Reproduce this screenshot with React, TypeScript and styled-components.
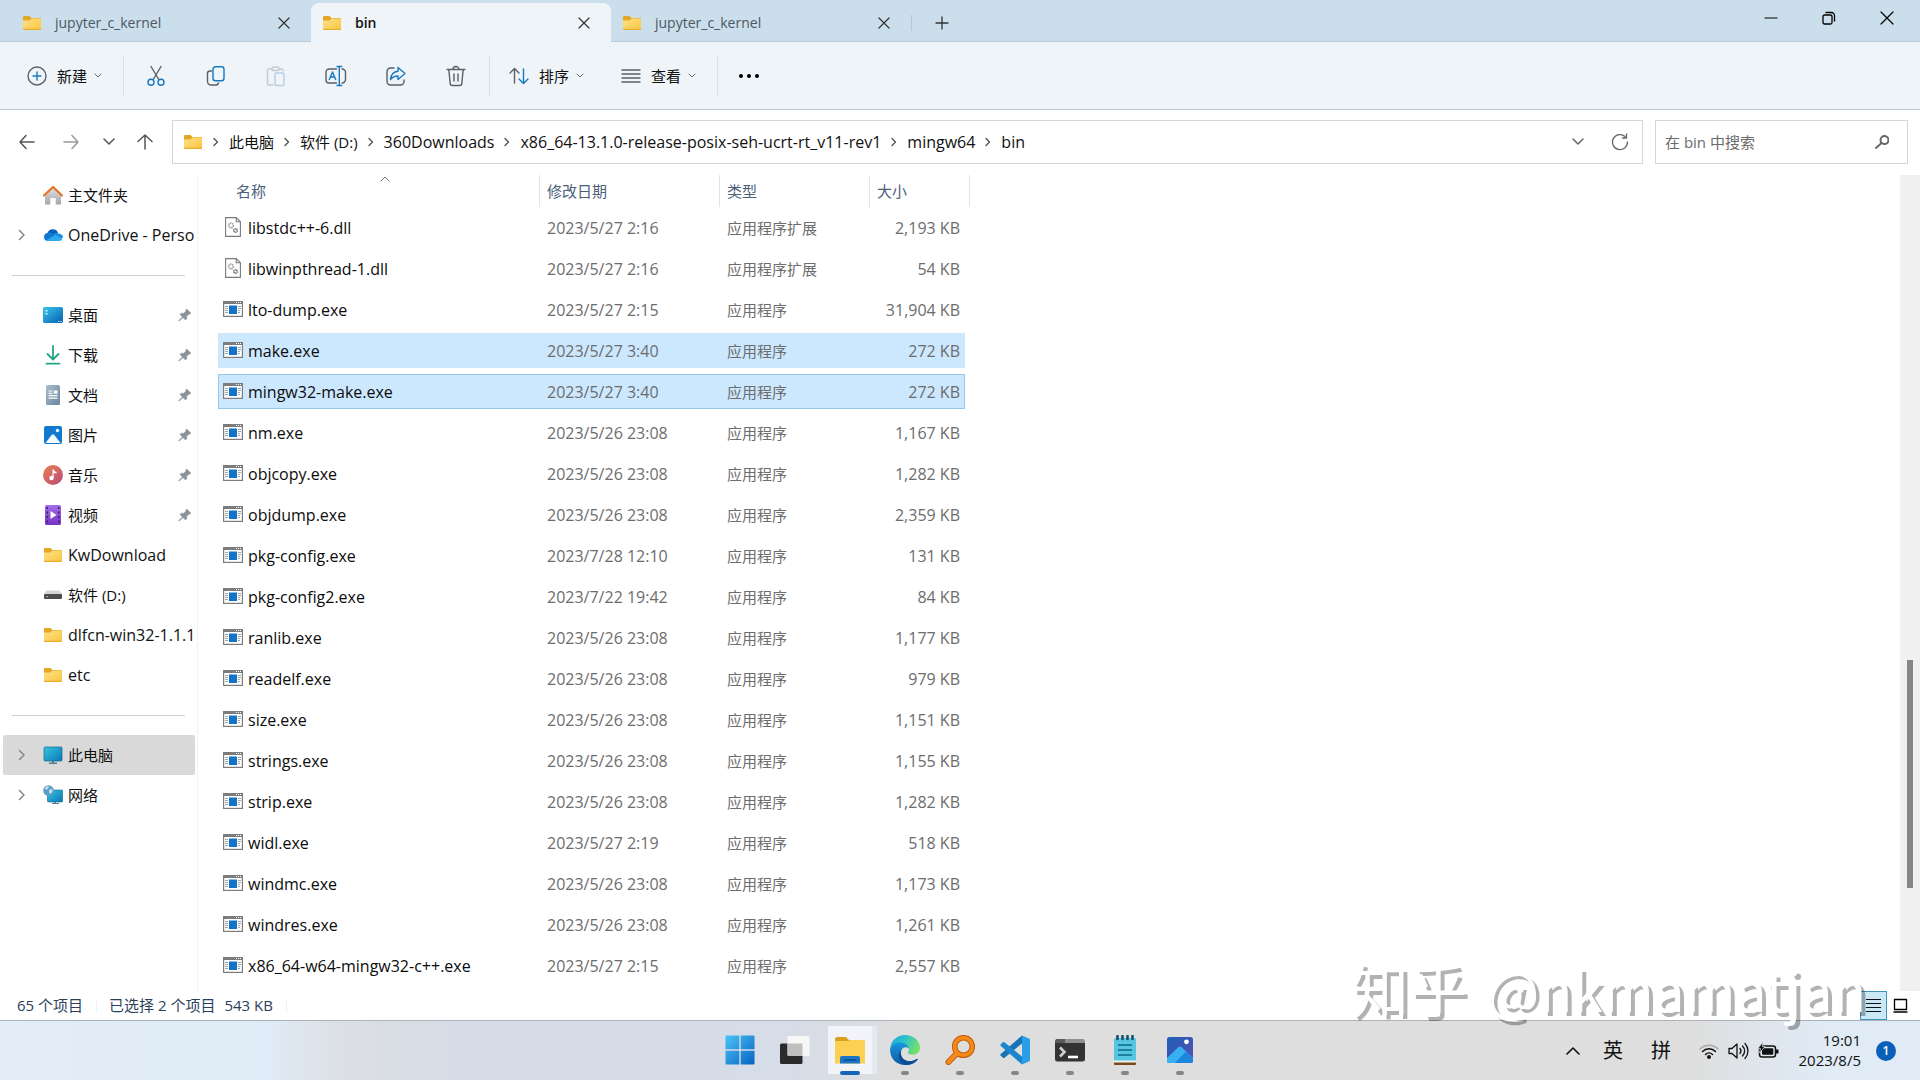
import React from 'react';
import styled, { createGlobalStyle, css } from 'styled-components';

const Global = createGlobalStyle`
  * { box-sizing: border-box; }
  body {
    margin: 0;
    background: #fff;
    color: #111;
    font-family: "Open Sans", "Noto Sans CJK SC", sans-serif;
    font-size: 15px;
    line-height: 20px;
  }
  button { font: inherit; color: inherit; background: none; border: 0; padding: 0; }
  svg { display: block; flex: none; }
  ul, ol { list-style: none; margin: 0; padding: 0; }
  a { color: inherit; text-decoration: none; }
`;

const Desktop = styled.div`
  position: relative;
  display: flex;
  flex-direction: column;
  height: 100vh;
  overflow: hidden;
`;

/* ---------- title bar ---------- */

const TitleBar = styled.header`
  display: flex;
  height: 42px;
  padding-left: 11px;
  background: #cbdeeb;
  box-shadow: inset 0 -1px #b9cbd9;
`;

const Tab = styled.div<{ $active?: boolean }>`
  display: flex;
  align-items: center;
  width: 300px;
  margin-top: 3px;
  padding: 0 17px 0 11px;
  font-size: 14px;
  color: #4b5863;
  ${p => p.$active && css`
    background: #eff4f9;
    border-radius: 8px 8px 0 0;
    color: #111;
    font-weight: 600;
  `}
`;

const TabTitle = styled.span`
  flex: 1;
  margin-left: 13px;
`;

const IconButton = styled.button<{ $w?: number }>`
  display: flex;
  align-items: center;
  justify-content: center;
  width: ${p => p.$w ?? 20}px;
  align-self: stretch;
`;

const NewTab = styled.div`
  display: flex;
  margin: 3px 0 0;
  &::before {
    content: '';
    width: 1px;
    height: 16px;
    align-self: center;
    background: #b5c7d5;
  }
`;

const WindowButtons = styled.div`
  display: flex;
  height: 36px;
  margin-left: auto;
  padding-right: 4px;
`;

/* ---------- command bar ---------- */

const Toolbar = styled.div`
  display: flex;
  align-items: center;
  height: 68px;
  padding-left: 10px;
  background: #eff4f9;
  border-bottom: 1px solid #bcc8d1;
`;

const Command = styled.button`
  display: flex;
  align-items: center;
  height: 40px;
  padding: 0 18px 0 17px;
  & + & { margin-left: 2px; }
  span { margin: 0 7px 0 10px; }
`;

const ToolButton = styled.button`
  display: flex;
  align-items: center;
  justify-content: center;
  width: 60px;
  height: 40px;
`;

const Separator = styled.span`
  width: 1px;
  height: 40px;
  margin: 0 2px 0 3px;
  background: #d9e0e6;
`;

/* ---------- navigation ---------- */

const NavBar = styled.nav`
  display: flex;
  align-items: center;
  height: 65px;
  padding: 0 12px 1px 5px;
`;

const Address = styled.div`
  display: flex;
  align-items: center;
  flex: 1;
  height: 44px;
  margin: 0 12px 0 7px;
  padding: 0 2px 0 10px;
  border: 1px solid #d5d5d5;
`;

const Crumbs = styled.ol`
  display: flex;
  flex: 1;
`;

const Crumb = styled.li<{ $latin?: boolean }>`
  display: flex;
  align-items: center;
  font-size: ${p => (p.$latin ? 16 : 15)}px;
  svg { margin: 0 9px; }
`;

const SearchBox = styled.label`
  display: flex;
  align-items: center;
  width: 253px;
  height: 44px;
  padding: 0 18px 0 9px;
  border: 1px solid #d5d5d5;
  input {
    flex: 1;
    min-width: 0;
    padding: 0;
    border: 0;
    outline: 0;
    font: inherit;
    background: none;
  }
  input::placeholder { color: #6b6b6b; opacity: 1; }
`;

/* ---------- body ---------- */

const Body = styled.div`
  display: flex;
  flex: 1;
  min-height: 0;
`;

const Sidebar = styled.aside`
  width: 198px;
  border-right: 1px solid #f1f3f5;
  overflow: hidden;
`;

const SideItem = styled.li<{ $active?: boolean; $latin?: boolean }>`
  display: flex;
  align-items: center;
  height: 40px;
  margin: 0 2px 0 3px;
  overflow: hidden;
  border-radius: 2px;
  background: ${p => (p.$active ? '#d9d9d9' : 'none')};
  font-size: ${p => (p.$latin ? 16 : 15)}px;
`;

const Expander = styled.span`
  display: flex;
  justify-content: center;
  flex: none;
  width: 40px;
  padding-right: 2px;
`;

const SideLink = styled.a`
  display: flex;
  align-items: center;
  gap: 5px;
  flex: 1;
  white-space: nowrap;
  svg + span { flex: 1; }
`;

const Pin = styled.span`
  margin-right: 3px;
`;

const SideRule = styled.li`
  height: 40px;
  padding: 20px 12px 0;
  &::before {
    content: '';
    display: block;
    height: 1px;
    background: #cfcfcf;
  }
`;

const ListPane = styled.main`
  flex: 1;
  padding-left: 20px;
  overflow: hidden;
`;

const FileTable = styled.table`
  width: 752px;
  table-layout: fixed;
  border-collapse: separate;
  border-spacing: 0;
  th, td { padding: 0; text-align: left; font-weight: 400; }
`;

const HeadCell = styled.div<{ $first?: boolean }>`
  position: relative;
  display: flex;
  align-items: center;
  height: 32px;
  margin-bottom: 3px;
  padding-left: ${p => (p.$first ? 18 : 7)}px;
  border-right: 1px solid #e3e3e3;
  color: #4c607a;
`;

const SortMark = styled.span`
  position: absolute;
  top: 0;
  left: 50%;
`;

type Mark = 'none' | 'selected' | 'focused';

const Cell = styled.div<{ $mark: Mark; $latin?: boolean }>`
  display: flex;
  align-items: center;
  height: 35px;
  margin-bottom: 6px;
  padding-left: 7px;
  border: solid transparent;
  border-width: 1px 0;
  color: #6d6d6d;
  font-size: ${p => (p.$latin ? 16 : 15)}px;
  ${p => p.$mark !== 'none' && css`background: #cce8ff;`}
  ${p => p.$mark === 'selected' && css`border-color: #cce8ff;`}
  ${p => p.$mark === 'focused' && css`border-color: #99c9ea;`}
`;

const NameCell = styled(Cell)`
  gap: 5px;
  padding-left: 4px;
  border-left-width: 1px;
  color: #0c0c0c;
  svg { margin-top: -2px; }
`;

const SizeCell = styled(Cell)`
  justify-content: flex-end;
  margin-right: 5px;
  padding-right: 4px;
  border-right-width: 1px;
`;

const ScrollTrack = styled.div`
  display: grid;
  grid-template-rows: 485fr 228fr 103fr;
  width: 20px;
  padding: 0 7px;
  background: #f0f0f0;
`;

const ScrollThumb = styled.div`
  grid-row: 2;
  background: #868686;
`;

const StatusBar = styled.footer`
  display: flex;
  align-items: center;
  height: 29px;
  padding: 0 6px 0 17px;
  color: #2b3f5c;
`;

const StatusText = styled.span`
  margin-right: 9px;
  padding-bottom: 2px;
`;

const StatusDivider = styled.span`
  width: 1px;
  height: 14px;
  margin: 0 12px 0 4px;
  background: #eef2f7;
`;

const ViewButton = styled.button<{ $on?: boolean }>`
  display: flex;
  align-items: center;
  justify-content: center;
  width: 27px;
  height: 29px;
  ${p => p.$on && css`
    margin-left: auto;
    background: #cbe8f6;
    border: 1px solid #3f93bd;
  `}
`;

/* ---------- taskbar ---------- */

const Taskbar = styled.footer`
  display: grid;
  grid-template-columns: 1fr auto 1fr;
  height: 60px;
  border-top: 1px solid #abb2ba;
  background: linear-gradient(90deg, #e3edf7 0, #dfebf6 14%, #dcdfe3 18%, #d5dbe7 25%, #d6dce8 41%, #dedede 47%, #dedede 88%, #e0ebf6 95%, #e0ebf6 100%);
`;

const Apps = styled.div`
  display: flex;
  grid-column: 2;
`;

const AppButton = styled.button<{ $state?: 'running' | 'active' }>`
  display: flex;
  flex-direction: column;
  align-items: center;
  justify-content: flex-end;
  width: 55px;
  gap: 6px;
  padding-bottom: 5px;
  &::after {
    content: '';
    width: ${p => (p.$state === 'active' ? 20 : 8)}px;
    height: 4px;
    border-radius: 2px;
    background: ${p => (p.$state === 'active' ? '#1466b8' : p.$state ? '#868686' : 'none')};
  }
  ${p => p.$state === 'active' && css`
    background: linear-gradient(#f2f4f9, #f2f4f9) 5px 5px / 44px 48px no-repeat,
      linear-gradient(#e6e9f0, #e6e9f0) 8px 5px / 46px 48px no-repeat;
  `}
`;

const Tray = styled.div`
  display: flex;
  align-items: center;
  justify-content: flex-end;
  padding-right: 24px;
`;

const Ime = styled.button`
  width: 48px;
  font-size: 20px;
  line-height: 28px;
`;

const Status = styled.button`
  display: flex;
  align-items: center;
  gap: 9px;
  margin: 0 18px 0 14px;
`;

const Clock = styled.button`
  width: 64px;
  margin-right: 15px;
  padding-bottom: 2px;
  text-align: right;
  line-height: 20px;
  white-space: nowrap;
`;

const Badge = styled.span`
  width: 20px;
  height: 20px;
  border-radius: 50%;
  background: #0a5fb8;
  color: #fff;
  font-size: 12px;
  font-weight: 600;
  text-align: center;
`;

const Watermark = styled.div`
  position: absolute;
  right: 54px;
  bottom: 54px;
  display: flex;
  align-items: baseline;
  gap: 20px;
  color: #fff;
  font-family: "Noto Sans CJK SC", sans-serif;
  font-size: 55px;
  line-height: 76px;
  text-shadow: 4px 4px 0 rgba(0, 0, 0, 0.3);
  pointer-events: none;
  b { font-weight: 400; font-size: 58px; }
`;

/* ---------- drawings ---------- */

const Stroke = ({ w, h, d, c = '#444', s = 1.3, box }: { w: number; h: number; d: string; c?: string; s?: number; box?: string }) => (
  <svg width={w} height={h} viewBox={box ?? `0 0 ${w} ${h}`} fill="none" stroke={c} strokeWidth={s} strokeLinecap="round" strokeLinejoin="round"><path d={d} /></svg>
);

const CloseX = () => <Stroke w={12} h={12} d="M1 1l10 10M11 1L1 11" c="#333" s={1.2} />;
const Down = ({ c = '#666' }: { c?: string }) => <Stroke w={8} h={6} d="M1 1l3 3 3-3" c={c} s={1} />;
const Right = () => <Stroke w={8} h={10} d="M2 1.500l3.500 3.500L2 8.500" c="#555" s={1.4} />;

const Folder = ({ size = 20 }: { size?: number }) => (
  <svg width={size} height={size} viewBox="0 0 20 20">
    <defs><linearGradient id="fold" x1="0" y1="0" x2="1" y2="1"><stop offset="0" stopColor="#ffe08a" /><stop offset="1" stopColor="#f9c63c" /></linearGradient></defs>
    <path d="M1 4a1 1 0 0 1 1-1h5.500l2 2H18a1 1 0 0 1 1 1v3H1z" fill="#e2a727" />
    <path d="M1 7.500h6.500l2-2H18a1 1 0 0 1 1 1V16a1 1 0 0 1-1 1H2a1 1 0 0 1-1-1z" fill="url(#fold)" />
    <path d="M1 15.700h18V16a1 1 0 0 1-1 1H2a1 1 0 0 1-1-1z" fill="#e7ad2c" />
  </svg>
);

const Home = () => (
  <svg width="20" height="20" viewBox="0 0 20 20">
    <defs><linearGradient id="hm" x1="0" y1="0" x2="0" y2="1"><stop offset="0" stopColor="#e4e4e4" /><stop offset="1" stopColor="#a5a5a8" /></linearGradient></defs>
    <path d="M2 9l8-7 8 7v10.500h-5.300V13H7.300v6.500H2z" fill="url(#hm)" />
    <path d="M1 10.500L10 2l9 8.500" fill="none" stroke="#e2762d" strokeWidth="2.400" strokeLinecap="round" strokeLinejoin="round" />
  </svg>
);

const Cloud = () => (
  <svg width="20" height="20" viewBox="0 0 20 20">
    <path d="M4.500 8a5.600 5.600 0 0 1 10.400-.5L9 14.500H4A3.700 3.700 0 0 1 4.500 8z" fill="#0a5fbd" />
    <path d="M4.300 8c2.500-1 4.200-.3 6 1l6 4.500-1.500 2.500H4.200a4.100 4.100 0 0 1 .1-8z" fill="#1279d2" />
    <path d="M10.500 9.200c1.600-2 4.400-2 5.500-.4 2.200 0 4 1.400 4 3.600l-3 2z" fill="#1b8fe3" />
    <path d="M3 15.500l7.500-4.600c1.300-.8 2.600-.6 3.600 0l5.400 3.100A3.600 3.600 0 0 1 16.300 16H4.200c-.5 0-.9-.2-1.200-.5z" fill="#31a9ee" />
  </svg>
);

const DesktopIcon = () => (
  <svg width="20" height="20" viewBox="0 0 20 20">
    <defs><linearGradient id="dk" x1="0" y1="0" x2="1" y2="1"><stop offset="0" stopColor="#35c6ea" /><stop offset="1" stopColor="#0a5fb0" /></linearGradient></defs>
    <rect y="2" width="20" height="16" rx="1.500" fill="url(#dk)" />
    <path d="M2.500 5h2v1.500h-2zM2.500 8h2v1.500h-2z" fill="#d9f6ff" />
    <path d="M15 16h1.500v1H15zM17.500 16H19v1h-1.500z" fill="#bfe6ff" />
  </svg>
);

const DownloadIcon = () => (
  <svg width="20" height="20" viewBox="0 0 20 20" fill="none" stroke="#21a685" strokeWidth="1.800" strokeLinecap="round" strokeLinejoin="round">
    <path d="M10 1v13M4.500 9l5.500 5.500L15.500 9M3.500 18.700h13" />
  </svg>
);

const DocIcon = () => (
  <svg width="20" height="20" viewBox="0 0 20 20">
    <defs><linearGradient id="dc" x1="0" y1="0" x2="1" y2="1"><stop offset="0" stopColor="#a9bdcd" /><stop offset="1" stopColor="#6c86a0" /></linearGradient></defs>
    <rect x="3" width="14" height="20" rx="1.500" fill="url(#dc)" />
    <path d="M5.500 6h4M5.500 8.300h4M5.500 10.700h9M5.500 13.200h9" stroke="#fff" strokeWidth="1.200" />
    <path d="M10.800 5.500h3.700v3.300h-3.700z" fill="#fff" />
  </svg>
);

const PictureIcon = () => (
  <svg width="20" height="20" viewBox="0 0 20 20">
    <rect x="1" y="1" width="18" height="18" rx="2" fill="#1379ce" />
    <circle cx="14.500" cy="5.500" r="1.700" fill="#e9f6ff" />
    <path d="M2.500 18L8.800 9.800q1.200-1.300 2.400 0L17.500 18z" fill="#f2f9ff" />
  </svg>
);

const MusicIcon = () => (
  <svg width="20" height="20" viewBox="0 0 20 20">
    <defs><linearGradient id="mu" x1="0" y1="0" x2="1" y2="1"><stop offset="0" stopColor="#e9814f" /><stop offset="1" stopColor="#b84a7c" /></linearGradient></defs>
    <circle cx="10" cy="10" r="10" fill="url(#mu)" />
    <circle cx="8.500" cy="13" r="2.200" fill="#fff" />
    <path d="M9.500 4.500h1.200q.5 2.300 2.800 2.300v1.700q-1.800 0-2.800-.8V13H9.500z" fill="#fff" />
  </svg>
);

const VideoIcon = () => (
  <svg width="20" height="20" viewBox="0 0 20 20">
    <defs><linearGradient id="vd" x1="0" y1="0" x2="0" y2="1"><stop offset="0" stopColor="#a46ce6" /><stop offset="1" stopColor="#7433c2" /></linearGradient></defs>
    <rect x="2" width="16" height="20" rx="1.500" fill="url(#vd)" />
    <path d="M3.500 2h1.500v2H3.500zm0 4.500h1.500v2H3.500zm0 4.500h1.500v2H3.500zm0 4.500h1.500v2H3.500zM15 2h1.500v2H15zm0 4.500h1.500v2H15zm0 4.500h1.500v2H15zm0 4.500h1.500v2H15z" fill="#3d1a73" />
    <path d="M7.500 6l6 4-6 4z" fill="#fff" />
  </svg>
);

const DriveIcon = () => (
  <svg width="20" height="20" viewBox="0 0 20 20">
    <path d="M3.500 5.500h13L19 9H1z" fill="#d5d5d5" />
    <rect x="1" y="9" width="18" height="5" rx="1" fill="#4c4c4c" />
    <path d="M3.500 11h1.200v1.200H3.500z" fill="#9fe0d0" />
  </svg>
);

const PcIcon = () => (
  <svg width="20" height="20" viewBox="0 0 20 20">
    <defs><linearGradient id="pc" x1="0" y1="0" x2="1" y2="1"><stop offset="0" stopColor="#32c5dc" /><stop offset="1" stopColor="#0d76ba" /></linearGradient></defs>
    <path d="M9 15h2v2.500h3V19H6v-1.500h3z" fill="#5c7c8c" />
    <rect x="1" y="2" width="18" height="14" rx="1" fill="url(#pc)" stroke="#126c96" strokeWidth=".7" />
  </svg>
);

const NetIcon = () => (
  <svg width="20" height="20" viewBox="0 0 20 20">
    <path d="M11.500 16h1.500v2h3v1H9v-1h2.500z" fill="#5c7c8c" />
    <rect x="4.500" y="5" width="15.200" height="12" rx="1" fill="url(#pc)" stroke="#126c96" strokeWidth=".6" />
    <circle cx="5.500" cy="5.500" r="5.300" fill="#5b9dc4" />
    <path d="M1.500 4q1-2.500 3.500-3l1 1.500-2 2zM6 5l3-1 .8 2-1.800 2.500-2-.5z" fill="#c4e2ee" />
  </svg>
);

const PinIcon = () => (
  <svg width="14" height="14" viewBox="0 0 14 14">
    <path d="M8.700 1l4.300 4.300-1.200 1-.8-.2-2.300 2.300.1 2.300-1.400 1.300L5 9.500 1.300 13H.8v-.6L4.500 9 2 6.500l1.300-1.300 2.500.1L8 3l-.2-1z" fill="#8b9299" stroke="#8b9299" strokeWidth=".5" />
  </svg>
);

const ExeIcon = () => (
  <svg width="20" height="16" viewBox="0 0 20 16">
    <rect x=".6" y=".6" width="18.800" height="14.800" fill="#fff" stroke="#7c7c7c" strokeWidth="1.200" />
    <path d="M0 0h20v3H0z" fill="#7c7c7c" />
    <path d="M13 1h1v1h-1zM15 1h1v1h-1zM17 1h1v1h-1z" fill="#fff" />
    <path d="M2 5.500h3M2 7.500h3M2 9.500h3M2 11.500h3M15 5.500h3M15 7.500h3M15 9.500h2M15 11.500h2" stroke="#9a9a9a" strokeWidth=".9" />
    <rect x="6" y="4.500" width="8" height="8.500" fill="#1273c9" />
  </svg>
);

const DllIcon = () => (
  <svg width="20" height="20" viewBox="0 0 20 20" fill="none" stroke="#7a7a7a" strokeWidth="1.100">
    <path d="M2.600.6h10.600l4.200 4.200v14.600H2.600z" fill="#fff" />
    <path d="M13.200.6v4.200h4.200" />
    <circle cx="8" cy="8.500" r="2.300" strokeDasharray="1.200 .6" strokeWidth="1.700" stroke="#9a9a9a" />
    <circle cx="12.500" cy="13.500" r="1.700" strokeDasharray="1.100 .5" strokeWidth="1.600" stroke="#6a6a6a" />
  </svg>
);

const G = '#5a6066';
const B = '#1878bf';
const I = ({ children, size = 22 }: { children: React.ReactNode; size?: number }) => (
  <svg width={size} height={size} viewBox={`0 0 ${size} ${size}`} fill="none" stroke={G} strokeWidth="1.400" strokeLinecap="round" strokeLinejoin="round">{children}</svg>
);

const NewIcon = () => <I size={20}><circle cx="10" cy="10" r="9" /><path d="M10 6v8M6 10h8" stroke={B} /></I>;
const CutIcon = () => <I><path d="M6 1.500l7.800 13M16 1.500l-7.800 13" /><circle cx="6" cy="17.300" r="3" stroke={B} /><circle cx="16" cy="17.300" r="3" stroke={B} /></I>;
const CopyIcon = () => <I><path d="M6.500 6H5a2.500 2.500 0 0 0-2.500 2.500v8A3.500 3.500 0 0 0 6 20h5a2.500 2.500 0 0 0 2.500-2" /><rect x="8" y="1.700" width="11" height="14" rx="2.500" stroke={B} /></I>;
const PasteIcon = () => <I><g stroke="#c3c9cf"><path d="M7 4H4a1.500 1.500 0 0 0-1.500 1.500v13A1.500 1.500 0 0 0 4 20h4M14 4h2.500A1.500 1.500 0 0 1 18 5.500V6" /><rect x="7" y="2" width="7" height="3.500" rx="1.500" /><rect x="10" y="8" width="9" height="12.500" rx="1.500" stroke="#b3cfe5" /></g></I>;
const RenameIcon = () => <I><path d="M11.500 4H4a3 3 0 0 0-3 3v8a3 3 0 0 0 3 3h7.500M17 4a3.500 3.500 0 0 1 3.500 3.500v7A3.500 3.500 0 0 1 17 18" /><path d="M14.300 1.500v19M12 1.500h4.600M12 20.500h4.600M4.300 14.500L7.500 7l3.200 7.500M5.500 12h4" stroke={B} /></I>;
const ShareIcon = () => <I><path d="M9 3H5.500A3.500 3.500 0 0 0 2 6.500v10A3.500 3.500 0 0 0 5.500 20h10a3.500 3.500 0 0 0 3.500-3.500V15" /><path d="M13 2.500l7 6-7 6V11c-3.500 0-5.500 1.200-7.500 3.500.5-4.500 3-8 7.500-8.300z" stroke={B} /></I>;
const TrashIcon = () => <I><path d="M2 4.500h18M8 4.500a3 3 0 0 1 6 0M3.800 4.500l1.400 14A2 2 0 0 0 7.200 20.500h7.600a2 2 0 0 0 2-2l1.400-14M9 9v7M13 9v7" /></I>;
const SortIcon = () => <I size={20}><path d="M5.500 17V2.500M1 7l4.500-4.500L10 7" /><path d="M14.500 3v14.500M10 13l4.500 4.500L19 13" stroke={B} /></I>;
const ViewIcon = () => <I size={20}><path d="M1 4h18M1 8h18M1 12h18M1 16h18" /></I>;

const Windows = () => (
  <svg width="30" height="30" viewBox="0 0 30 30">
    <defs><linearGradient id="wn" x1="0" y1="0" x2="1" y2="1"><stop offset="0" stopColor="#4cc3f7" /><stop offset="1" stopColor="#0563c1" /></linearGradient></defs>
    <path d="M1.500.5h12.800v13.800H.5V1.500a1 1 0 0 1 1-1zM15.700.5h12.800a1 1 0 0 1 1 1v12.800H15.700zM.5 15.700h13.800v13.800H1.500a1 1 0 0 1-1-1zM15.700 15.700h13.800v12.800a1 1 0 0 1-1 1H15.700z" fill="url(#wn)" />
  </svg>
);
const TaskView = () => (
  <svg width="30" height="30" viewBox="0 0 30 30">
    <rect x="0" y="8.500" width="22.500" height="20.500" rx="1.500" fill="#2a2a2a" />
    <rect x="7.500" y="1" width="22" height="20" rx="1.500" fill="#f7f7f7" />
    <path d="M7.500 8.500h15V21H9a1.500 1.500 0 0 1-1.500-1.500z" fill="#bfbfbf" />
  </svg>
);
const Explorer = () => (
  <svg width="30" height="30" viewBox="0 0 30 30">
    <path d="M0 4a2 2 0 0 1 2-2h9l3 3h14a2 2 0 0 1 2 2v5H0z" fill="#d9a21d" />
    <path d="M0 6h13l2-1h13a2 2 0 0 1 2 2v21.500H0z" fill="#fcd053" />
    <path d="M5 28.500V23a2 2 0 0 1 2-2h16a2 2 0 0 1 2 2v5.500z" fill="#1a76c9" />
    <path d="M8.500 25h13" stroke="#0c4b8e" strokeWidth="1.500" />
  </svg>
);
const Edge = () => (
  <svg width="30" height="30" viewBox="0 0 30 30">
    <defs>
      <linearGradient id="e1" x1="0" y1="0" x2="1" y2=".4"><stop offset="0" stopColor="#1aa3e0" /><stop offset=".5" stopColor="#2cc3c8" /><stop offset="1" stopColor="#6fe06a" /></linearGradient>
      <linearGradient id="e2" x1="0" y1="0" x2="0" y2="1"><stop offset="0" stopColor="#1a95dd" /><stop offset="1" stopColor="#0c59a4" /></linearGradient>
    </defs>
    <path d="M.3 13C1 5.500 7.300 0 15 0c8.500 0 15 6 15 12.800 0 4.200-3.300 7-7.300 7-3.200 0-5-1-5-2.200 0-.8 1.100-1.300 1.100-3.200 0-2.600-2.600-5-6.600-5C7 9.400 2 10.500.3 13z" fill="url(#e1)" />
    <path d="M.2 13.500C1.500 9.500 6.500 7.500 11 7.800c4.500.2 7.600 3 7.800 6-1-2-5.400-2.600-7.300 1-2.500 5 1.500 11.500 8 11.500 3.500 0 5.500-1.300 7.500-2.300.7-.3 1 .2.600.8A15 15 0 0 1 15 30C6 30-.8 22.500.2 13.500z" fill="url(#e2)" />
    <path d="M11.500 14.800C6.500 19 8.500 27 15.500 30c5.500 0 9.500-2.200 12.100-5.200.4-.6.100-1.100-.6-.8-2 1-4 2.300-7.500 2.300-6.500 0-10.500-6.500-8-11.500z" fill="#0e4b96" />
  </svg>
);
const Finder = () => (
  <svg width="30" height="30" viewBox="0 0 30 30">
    <circle cx="18.500" cy="11.500" r="8.800" fill="none" stroke="#c45a05" strokeWidth="5.600" />
    <path d="M11.800 18.500L3.500 27" stroke="#c45a05" strokeWidth="6" strokeLinecap="round" />
    <circle cx="18.500" cy="11.500" r="8.800" fill="none" stroke="#f58a1c" strokeWidth="3.600" />
    <path d="M11.800 18.500L3.500 27" stroke="#f58a1c" strokeWidth="4" strokeLinecap="round" />
  </svg>
);
const Code = () => (
  <svg width="30" height="30" viewBox="0 0 30 30">
    <path d="M22 .5L29 3.500a1.500 1.500 0 0 1 1 1.400v20.200a1.500 1.500 0 0 1-1 1.400L22 29.500 22 .5z" fill="#2a9fe8" />
    <path d="M22 .5v8L4.500 22.700a1.200 1.200 0 0 1-1.600 0L.8 20.800a1.200 1.200 0 0 1 0-1.800z" fill="#1673b8" />
    <path d="M22 29.500v-8L4.500 7.300a1.200 1.200 0 0 0-1.600 0L.8 9.200a1.200 1.200 0 0 0 0 1.800z" fill="#1b86d0" />
  </svg>
);
const Terminal = () => (
  <svg width="30" height="30" viewBox="0 0 30 30">
    <path d="M0 6.500A2.500 2.500 0 0 1 2.500 4h25A2.500 2.500 0 0 1 30 6.500V9H0z" fill="#8f8f8f" />
    <path d="M0 6.500A2.500 2.500 0 0 1 2.500 4H10v5H0z" fill="#595959" />
    <path d="M0 8h30v16a2.500 2.500 0 0 1-2.500 2.500h-25A2.500 2.500 0 0 1 0 24z" fill="#333" />
    <path d="M5 12.500l4.500 4.500L5 21.500" fill="none" stroke="#cfcfcf" strokeWidth="2.600" />
    <path d="M13 22h10" stroke="#fff" strokeWidth="2.600" />
  </svg>
);
const Notepad = () => (
  <svg width="30" height="30" viewBox="0 0 30 30">
    <rect x="4" y="3" width="22" height="24" rx="1.500" fill="#56c5e0" />
    <path d="M4 27h22v2a1 1 0 0 1-1 1H5a1 1 0 0 1-1-1z" fill="#7a4a16" />
    <path d="M4 25.500h22v2H4z" fill="#f1f1f1" />
    <path d="M8 10h14M8 15h14M8 20h14" stroke="#0e6a86" strokeWidth="1.700" />
    <path d="M7.500 1v3M12.500 1v3M17.500 1v3M22.500 1v3" stroke="#14506a" strokeWidth="2.600" strokeLinecap="round" />
  </svg>
);
const Photos = () => (
  <svg width="30" height="30" viewBox="0 0 30 30">
    <defs><linearGradient id="ph" x1="0" y1="0" x2="1" y2="1"><stop offset="0" stopColor="#1d5fb5" /><stop offset="1" stopColor="#5b4fb5" /></linearGradient></defs>
    <rect x="2" y="2" width="26" height="26" rx="2.500" fill="url(#ph)" />
    <circle cx="21.500" cy="6.800" r="2.400" fill="#fff" />
    <path d="M2 23l11-10.500a3 3 0 0 1 4 0L28 23v2.500a2.500 2.500 0 0 1-2.500 2.500h-21A2.500 2.500 0 0 1 2 25.500z" fill="#37b0f2" />
    <path d="M10 28L21 16.500l7 6.500v2.500a2.500 2.500 0 0 1-2.500 2.500z" fill="#1d86dc" />
  </svg>
);

/* ---------- data ---------- */

const files: [string, string, string][] = [
  ['libstdc++-6.dll', '2023/5/27 2:16', '2,193 KB'],
  ['libwinpthread-1.dll', '2023/5/27 2:16', '54 KB'],
  ['lto-dump.exe', '2023/5/27 2:15', '31,904 KB'],
  ['make.exe', '2023/5/27 3:40', '272 KB'],
  ['mingw32-make.exe', '2023/5/27 3:40', '272 KB'],
  ['nm.exe', '2023/5/26 23:08', '1,167 KB'],
  ['objcopy.exe', '2023/5/26 23:08', '1,282 KB'],
  ['objdump.exe', '2023/5/26 23:08', '2,359 KB'],
  ['pkg-config.exe', '2023/7/28 12:10', '131 KB'],
  ['pkg-config2.exe', '2023/7/22 19:42', '84 KB'],
  ['ranlib.exe', '2023/5/26 23:08', '1,177 KB'],
  ['readelf.exe', '2023/5/26 23:08', '979 KB'],
  ['size.exe', '2023/5/26 23:08', '1,151 KB'],
  ['strings.exe', '2023/5/26 23:08', '1,155 KB'],
  ['strip.exe', '2023/5/26 23:08', '1,282 KB'],
  ['widl.exe', '2023/5/27 2:19', '518 KB'],
  ['windmc.exe', '2023/5/26 23:08', '1,173 KB'],
  ['windres.exe', '2023/5/26 23:08', '1,261 KB'],
  ['x86_64-w64-mingw32-c++.exe', '2023/5/27 2:15', '2,557 KB'],
];

const marks: Record<string, Mark> = { 'make.exe': 'selected', 'mingw32-make.exe': 'focused' };

type Side = { name: string; icon: React.ReactNode; pin?: boolean; expand?: boolean; active?: boolean } | null;

const side: Side[] = [
  { name: '主文件夹', icon: <Home /> },
  { name: 'OneDrive - Personal', icon: <Cloud />, expand: true },
  null,
  { name: '桌面', icon: <DesktopIcon />, pin: true },
  { name: '下载', icon: <DownloadIcon />, pin: true },
  { name: '文档', icon: <DocIcon />, pin: true },
  { name: '图片', icon: <PictureIcon />, pin: true },
  { name: '音乐', icon: <MusicIcon />, pin: true },
  { name: '视频', icon: <VideoIcon />, pin: true },
  { name: 'KwDownload', icon: <Folder /> },
  { name: '软件 (D:)', icon: <DriveIcon /> },
  { name: 'dlfcn-win32-1.1.1', icon: <Folder /> },
  { name: 'etc', icon: <Folder /> },
  null,
  { name: '此电脑', icon: <PcIcon />, expand: true, active: true },
  { name: '网络', icon: <NetIcon />, expand: true },
];

const crumbs = ['此电脑', '软件 (D:)', '360Downloads', 'x86_64-13.1.0-release-posix-seh-ucrt-rt_v11-rev1', 'mingw64', 'bin'];
const tabs = ['jupyter_c_kernel', 'bin', 'jupyter_c_kernel'];

const isLatin = (s: string) => /^[\x20-\x7e]+$/.test(s);

const tools: [string, React.ReactNode][] = [
  ['剪切', <CutIcon />], ['复制', <CopyIcon />], ['粘贴', <PasteIcon />],
  ['重命名', <RenameIcon />], ['共享', <ShareIcon />], ['删除', <TrashIcon />],
];

const apps: [string, React.ReactNode, ('running' | 'active')?][] = [
  ['开始', <Windows />], ['任务视图', <TaskView />], ['文件资源管理器', <Explorer />, 'active'],
  ['Edge', <Edge />, 'running'], ['Everything', <Finder />, 'running'], ['VS Code', <Code />, 'running'],
  ['终端', <Terminal />, 'running'], ['记事本', <Notepad />, 'running'], ['照片', <Photos />, 'running'],
];

export default function App() {
  return (
    <Desktop>
      <Global />
      <TitleBar>
        {tabs.map((t, i) => (
          <Tab key={i} $active={i === 1}>
            <Folder />
            <TabTitle>{t}</TabTitle>
            <IconButton aria-label="关闭标签页"><CloseX /></IconButton>
          </Tab>
        ))}
        <NewTab>
          <IconButton $w={60} aria-label="新建标签页"><Stroke w={14} h={14} d="M7 1v12M1 7h12" c="#333" /></IconButton>
        </NewTab>
        <WindowButtons>
          <IconButton $w={58} aria-label="最小化"><Stroke w={14} h={14} d="M1 7h12" c="#000" s={1.2} /></IconButton>
          <IconButton $w={58} aria-label="还原"><Stroke w={14} h={14} d="M2.500 4h6a1.500 1.500 0 0 1 1.500 1.500v6A1.500 1.500 0 0 1 8.500 13h-6A1.500 1.500 0 0 1 1 11.500v-6A1.500 1.500 0 0 1 2.500 4zM4 1.500h5.500A3 3 0 0 1 12.500 4.500V10" c="#000" /></IconButton>
          <IconButton $w={58} aria-label="关闭"><Stroke w={14} h={14} d="M1 1l12 12M13 1L1 13" c="#000" s={1.2} /></IconButton>
        </WindowButtons>
      </TitleBar>

      <Toolbar>
        <Command><NewIcon /><span>新建</span><Down /></Command>
        <Separator />
        {tools.map(([name, icon]) => <ToolButton key={name} aria-label={name}>{icon}</ToolButton>)}
        <Separator />
        <Command><SortIcon /><span>排序</span><Down /></Command>
        <Command><ViewIcon /><span>查看</span><Down /></Command>
        <Separator />
        <ToolButton aria-label="更多">
          <svg width="22" height="6" viewBox="0 0 22 6"><circle cx="2" cy="3" r="2" /><circle cx="10" cy="3" r="2" /><circle cx="18" cy="3" r="2" /></svg>
        </ToolButton>
      </Toolbar>

      <NavBar>
        <IconButton $w={44} aria-label="后退"><Stroke w={16} h={16} d="M15 8H1M7 1.500L1 8l6 6.500" c="#555" s={1.500} /></IconButton>
        <IconButton $w={44} aria-label="前进"><Stroke w={16} h={16} d="M1 8h14M9 1.500L15 8l-6 6.500" c="#999" s={1.500} /></IconButton>
        <IconButton $w={32} aria-label="最近浏览的位置"><Stroke w={12} h={8} d="M1 1l5 5 5-5" c="#555" s={1.500} /></IconButton>
        <IconButton $w={40} aria-label="向上"><Stroke w={16} h={16} d="M8 15V1M1 7.500L8 1l7 6.500" c="#555" s={1.500} /></IconButton>
        <Address>
          <Folder />
          <Crumbs>
            {crumbs.map(c => (
              <Crumb key={c} $latin={isLatin(c)}><Right /><a href="#">{c}</a></Crumb>
            ))}
          </Crumbs>
          <IconButton $w={44} aria-label="历史记录"><Stroke w={12} h={8} d="M1 1l5 5 5-5" c="#666" s={1.500} /></IconButton>
          <IconButton $w={40} aria-label="刷新"><Stroke w={18} h={18} d="M16.500 9A7.500 7.500 0 1 1 14 3.500M15.500 1v4h-4" c="#666" /></IconButton>
        </Address>
        <SearchBox>
          <input aria-label="搜索" placeholder="在 bin 中搜索" />
          <Stroke w={14} h={14} d="M5.500 5A4 4 0 1 1 9 9 4 4 0 0 1 5.500 5zM6 8.500L1 13" c="#666" s={1.900} />
        </SearchBox>
      </NavBar>

      <Body>
        <Sidebar>
          <ul>
            {side.map((s, i) => s === null ? <SideRule key={i} /> : (
              <SideItem key={i} $active={s.active} $latin={isLatin(s.name)}>
                <Expander>{s.expand && <Stroke w={8} h={14} d="M1.500 2.500L6 7l-4.500 4.500" c="#888" s={1.500} />}</Expander>
                <SideLink href="#">{s.icon}<span>{s.name}</span>{s.pin && <Pin><PinIcon /></Pin>}</SideLink>
              </SideItem>
            ))}
          </ul>
        </Sidebar>
        <ListPane>
          <FileTable>
            <colgroup><col width="322" /><col width="180" /><col width="150" /><col width="100" /></colgroup>
            <thead>
              <tr>
                <th><HeadCell $first>名称<SortMark><Stroke w={12} h={8} d="M2 6l4-4 4 4" c="#777" s={1} /></SortMark></HeadCell></th>
                <th><HeadCell>修改日期</HeadCell></th>
                <th><HeadCell>类型</HeadCell></th>
                <th><HeadCell>大小</HeadCell></th>
              </tr>
            </thead>
            <tbody>
              {files.map(([name, date, size]) => {
                const mark = marks[name] ?? 'none';
                const dll = name.endsWith('.dll');
                return (
                  <tr key={name}>
                    <td><NameCell $mark={mark} $latin>{dll ? <DllIcon /> : <ExeIcon />}{name}</NameCell></td>
                    <td><Cell $mark={mark} $latin>{date}</Cell></td>
                    <td><Cell $mark={mark}>{dll ? '应用程序扩展' : '应用程序'}</Cell></td>
                    <td><SizeCell $mark={mark} $latin>{size}</SizeCell></td>
                  </tr>
                );
              })}
            </tbody>
          </FileTable>
        </ListPane>
        <ScrollTrack><ScrollThumb /></ScrollTrack>
      </Body>

      <StatusBar>
        <StatusText>65 个项目</StatusText>
        <StatusDivider />
        <StatusText>已选择 2 个项目</StatusText>
        <StatusText>543 KB</StatusText>
        <StatusDivider />
        <ViewButton $on aria-label="详细信息"><Stroke w={15} h={15} d="M0 1.500h15M0 5.500h15M0 9.500h15M0 13.500h15" c="#111" s={1} /></ViewButton>
        <ViewButton aria-label="大图标"><Stroke w={15} h={15} d="M1.500 1.500h12v10h-12zM1 14h13" c="#000" /></ViewButton>
      </StatusBar>

      <Taskbar>
        <Apps>
          {apps.map(([name, icon, state]) => <AppButton key={name} $state={state} aria-label={name}>{icon}</AppButton>)}
        </Apps>
        <Tray>
          <IconButton $w={32} aria-label="显示隐藏的图标"><Stroke w={14} h={10} d="M1 8l6-6 6 6" c="#111" s={1.600} /></IconButton>
          <Ime>英</Ime>
          <Ime>拼</Ime>
          <Status aria-label="网络、音量、电池">
            <svg width="20" height="18" viewBox="0 0 20 18" fill="none" stroke="#111" strokeWidth="1.500" strokeLinecap="round">
              <path d="M1 7a12.500 12.500 0 0 1 18 0" stroke="#aaa" />
              <path d="M3.500 9.500a9 9 0 0 1 13 0M6.500 12.500a5 5 0 0 1 7 0" />
              <circle cx="10" cy="15" r="1.200" fill="#111" />
            </svg>
            <svg width="21" height="18" viewBox="0 0 21 18" fill="none" stroke="#111" strokeWidth="1.300" strokeLinecap="round" strokeLinejoin="round">
              <path d="M1 6.500v5h3l5 4.500V2L4 6.500zM12 6.500a4 4 0 0 1 0 5M14.500 4a7 7 0 0 1 0 10M17 1.500a11 11 0 0 1 0 15" />
            </svg>
            <svg width="21" height="18" viewBox="0 0 21 18">
              <rect x="1.500" y="4" width="16" height="11" rx="2.500" fill="none" stroke="#111" strokeWidth="1.500" />
              <rect x="4" y="6.300" width="11.300" height="6.500" rx="1" fill="#111" />
              <path d="M18 7.500h2.500v4H18z" fill="#111" />
              <path d="M5 0L0 6.500h2.500L1.500 11 7 4.500H4.300z" fill="#111" stroke="#e0e4e8" strokeWidth=".7" />
            </svg>
          </Status>
          <Clock>19:01<br />2023/8/5</Clock>
          <Badge>1</Badge>
        </Tray>
      </Taskbar>

      <Watermark><b>知乎</b><span>@nkmamatjan</span></Watermark>
    </Desktop>
  );
}
